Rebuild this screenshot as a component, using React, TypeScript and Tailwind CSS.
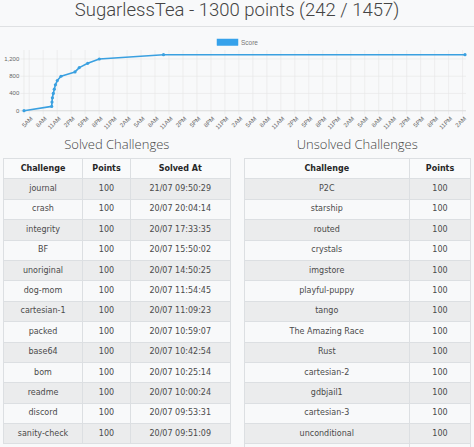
import React from 'react';

const solved = [
  { name: 'journal', points: 100, at: '21/07 09:50:29' },
  { name: 'crash', points: 100, at: '20/07 20:04:14' },
  { name: 'integrity', points: 100, at: '20/07 17:33:35' },
  { name: 'BF', points: 100, at: '20/07 15:50:02' },
  { name: 'unoriginal', points: 100, at: '20/07 14:50:25' },
  { name: 'dog-mom', points: 100, at: '20/07 11:54:45' },
  { name: 'cartesian-1', points: 100, at: '20/07 11:09:23' },
  { name: 'packed', points: 100, at: '20/07 10:59:07' },
  { name: 'base64', points: 100, at: '20/07 10:42:54' },
  { name: 'bom', points: 100, at: '20/07 10:25:14' },
  { name: 'readme', points: 100, at: '20/07 10:00:24' },
  { name: 'discord', points: 100, at: '20/07 09:53:31' },
  { name: 'sanity-check', points: 100, at: '20/07 09:51:09' },
];

const unsolved = [
  'P2C',
  'starship',
  'routed',
  'crystals',
  'imgstore',
  'playful-puppy',
  'tango',
  'The Amazing Race',
  'Rust',
  'cartesian-2',
  'gdbjail1',
  'cartesian-3',
  'unconditional',
];

const hours = ['5AM', '8AM', '11AM', '2PM', '5PM', '8PM', '11PM', '2AM'];
const xLabels = Array.from({ length: 32 }, (_, i) => hours[i % 8]);

// score points in chart pixel space: [x, score]
const points: [number, number][] = [
  [24, 0],
  [51.7, 100],
  [52, 200],
  [52.4, 300],
  [53.3, 400],
  [54.3, 500],
  [55.4, 600],
  [57.3, 700],
  [61, 800],
  [75, 900],
  [79.3, 1000],
  [87.7, 1100],
  [99.3, 1200],
  [163.5, 1300],
  [465, 1300],
];

const yOf = (v: number) => 110.7 - v * 0.04308;
const gridX = (i: number) => 29.2 + 13.98 * i;

function ScoreChart() {
  const line = points.map(([x, v]) => `${x},${yOf(v)}`).join(' ');
  return (
    <svg className="block w-full h-[110px]" viewBox="0 27 474 110" preserveAspectRatio="none">
      {/* legend */}
      <rect x="217" y="39" width="21" height="6.5" fill="#36a2eb" stroke="#36a2eb" strokeWidth="0.5" />
      <text x="241" y="44.5" fontSize="6.5" fill="#777" fontFamily="'Liberation Sans', Arial, sans-serif">
        Score
      </text>

      {/* vertical grid */}
      {xLabels.map((_, i) => (
        <line key={i} x1={gridX(i)} x2={gridX(i)} y1="50" y2="114.5" stroke="#e6e6e6" strokeWidth="0.6" />
      ))}
      {/* horizontal grid */}
      {[0, 400, 800, 1200].map((v) => (
        <line key={v} x1="20.5" x2="466" y1={yOf(v)} y2={yOf(v)} stroke="#e6e6e6" strokeWidth="0.6" />
      ))}
      <line x1="24" x2="24" y1="50" y2="114.5" stroke="#e2e2e2" strokeWidth="0.6" />
      <line x1="20.5" x2="466" y1={yOf(0)} y2={yOf(0)} stroke="#d8d8d8" strokeWidth="0.7" />

      {/* y labels */}
      {[0, 400, 800, 1200].map((v) => (
        <text
          key={v}
          x="19.3"
          y={yOf(v) + 2}
          fontSize="6"
          textAnchor="end"
          fill="#666"
          fontFamily="'Liberation Sans', Arial, sans-serif"
        >
          {v.toLocaleString('en-US')}
        </text>
      ))}

      {/* x labels */}
      {xLabels.map((l, i) => (
        <text
          key={i}
          transform={`translate(${gridX(i) + 2.5}, 117.5) rotate(-45)`}
          fontSize="6"
          textAnchor="end"
          dy="2"
          fill="#666"
          fontFamily="'Liberation Sans', Arial, sans-serif"
        >
          {l}
        </text>
      ))}

      {/* data */}
      <polyline points={line} fill="none" stroke="#3aa0e0" strokeWidth="1.6" strokeLinejoin="round" />
      {points.map(([x, v], i) => (
        <circle key={i} cx={x} cy={yOf(v)} r="1.6" fill="#3aa0e0" />
      ))}
    </svg>
  );
}

const cell = 'border border-[#dcdfe2] text-center align-middle p-0';

export default function App() {
  return (
    <div className="min-h-screen bg-[#f8f9fa] overflow-hidden font-['Open_Sans',sans-serif] text-[#444]">
      <h1 className="pb-[5px] leading-[21px] text-[18.5px] font-light font-['Roboto',sans-serif] text-center text-[#444] border-b border-[#dfe1e3]">
        SugarlessTea - 1300 points (242 / 1457)
      </h1>

      <ScoreChart />

      <div className="grid grid-cols-2 gap-[13px] px-[3px]">
        <div>
          <h2 className="h-[15px] leading-[15px] mb-[6px] text-[13px] font-light text-center text-[#444]">
            Solved Challenges
          </h2>
          <table className="w-full table-fixed border-collapse font-['DejaVu_Sans',sans-serif] text-[8px] text-[#4a4a4a]">
            <colgroup>
              <col className="w-[79px]" />
              <col className="w-[48px]" />
              <col />
            </colgroup>
            <thead>
              <tr className="h-[20.4px] bg-[#f9fafb] text-[#262626]">
                <th className={cell + ' font-bold'}>Challenge</th>
                <th className={cell + ' font-bold'}>Points</th>
                <th className={cell + ' font-bold'}>Solved At</th>
              </tr>
            </thead>
            <tbody>
              {solved.map((s, i) => (
                <tr key={s.name} className={'h-[20.4px] ' + (i % 2 === 0 ? 'bg-[#ebeced]' : 'bg-[#f8f9fa]')}>
                  <td className={cell}>{s.name}</td>
                  <td className={cell}>{s.points}</td>
                  <td className={cell}>{s.at}</td>
                </tr>
              ))}
            </tbody>
          </table>
        </div>

        <div>
          <h2 className="h-[15px] leading-[15px] mb-[6px] text-[13px] font-light text-center text-[#444]">
            Unsolved Challenges
          </h2>
          <table className="w-full table-fixed border-collapse font-['DejaVu_Sans',sans-serif] text-[8px] text-[#4a4a4a]">
            <colgroup>
              <col />
              <col className="w-[61px]" />
            </colgroup>
            <thead>
              <tr className="h-[20.4px] bg-[#f9fafb] text-[#262626]">
                <th className={cell + ' font-bold'}>Challenge</th>
                <th className={cell + ' font-bold'}>Points</th>
              </tr>
            </thead>
            <tbody>
              {unsolved.map((name, i) => (
                <tr key={name} className={'h-[20.4px] ' + (i % 2 === 0 ? 'bg-[#ebeced]' : 'bg-[#f8f9fa]')}>
                  <td className={cell}>{name}</td>
                  <td className={cell}>100</td>
                </tr>
              ))}
              {/* next row continues below the fold */}
              <tr className="h-[20.4px] bg-[#f8f9fa]">
                <td className={cell} />
                <td className={cell} />
              </tr>
            </tbody>
          </table>
        </div>
      </div>
    </div>
  );
}
